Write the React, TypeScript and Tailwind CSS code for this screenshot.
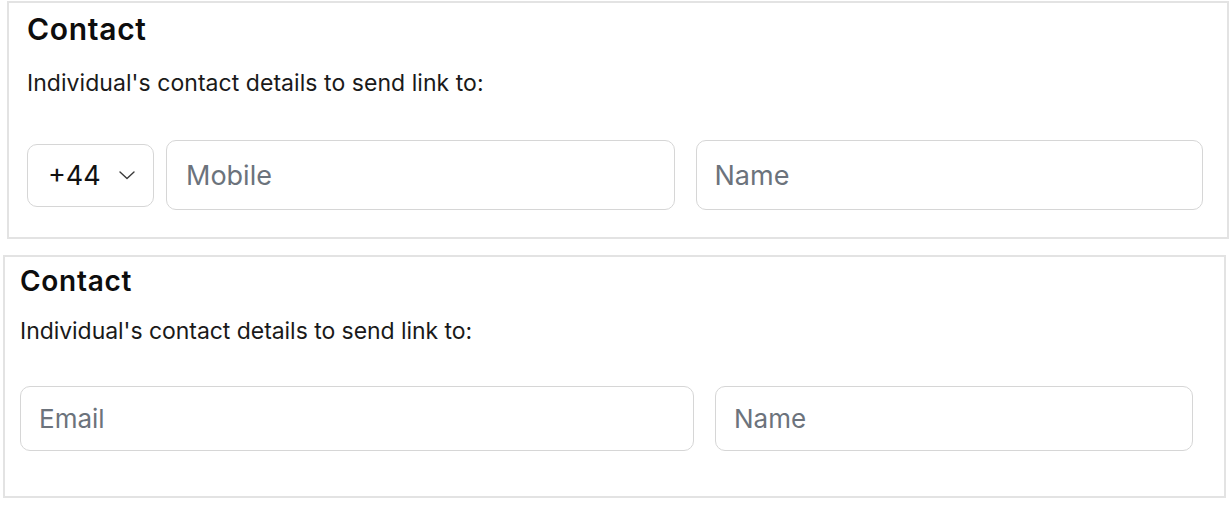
import React from "react";

const font = { fontFamily: "Inter, 'Liberation Sans', sans-serif" };

function Chevron() {
  return (
    <svg width="16" height="9" viewBox="0 0 16 9" fill="none" className="block">
      <polyline points="1,1 8,7.5 15,1" stroke="#3a3a3a" strokeWidth="1.4" strokeLinecap="round" strokeLinejoin="round" />
    </svg>
  );
}

export default function App() {
  return (
    <div className="bg-white w-[1232px] h-[506px] overflow-hidden text-[#111]" style={font}>
      {/* Panel 1 */}
      <div className="ml-[7px] mt-[1px] w-[1222px] h-[238px] border-2 border-[#e3e3e3] pl-[18px] pr-[24px] pt-[8px]">
        <h2 className="text-[30px] leading-[36px] font-semibold tracking-[0.7px] text-[#0d0d0d]">Contact</h2>
        <p className="mt-[22px] text-[23px] leading-[28px] tracking-[0.05px] text-[#1a1a1a]">
          Individual's contact details to send link to:
        </p>
        <div className="mt-[43px] flex items-center">
          <div className="w-[127px] h-[63px] shrink-0 rounded-[10px] border-[1.5px] border-[#d6d6d6] flex items-center pl-[20px] pr-[18px] justify-between">
            <span className="text-[27px] leading-none text-[#111]">+44</span>
            <Chevron />
          </div>
          <input
            className="ml-[12px] flex-1 min-w-0 h-[70px] rounded-[10px] border-[1.5px] border-[#d6d6d6] pl-[19px] text-[27px] outline-none placeholder:text-[#6c737c]"
            placeholder="Mobile"
          />
          <input
            className="ml-[21px] flex-1 min-w-0 h-[70px] rounded-[10px] border-[1.5px] border-[#d6d6d6] pl-[18px] text-[27px] outline-none placeholder:text-[#6c737c]"
            placeholder="Name"
          />
        </div>
      </div>

      {/* Panel 2 */}
      <div className="ml-[3px] mt-[16px] w-[1223px] h-[243px] border-2 border-[#e3e3e3] pl-[15px] pr-[31px] pt-[7px]">
        <h2 className="text-[28px] leading-[34px] font-semibold tracking-[0.7px] text-[#0d0d0d]">Contact</h2>
        <p className="mt-[19px] text-[23px] leading-[28px] tracking-[-0.05px] text-[#1a1a1a]">
          Individual's contact details to send link to:
        </p>
        <div className="mt-[41px] flex items-center">
          <input
            className="w-[674px] shrink-0 h-[65px] rounded-[10px] border-[1.5px] border-[#d6d6d6] pl-[18px] text-[26px] outline-none placeholder:text-[#6c737c]"
            placeholder="Email"
          />
          <input
            className="ml-[21px] flex-1 min-w-0 h-[65px] rounded-[10px] border-[1.5px] border-[#d6d6d6] pl-[18px] text-[26px] outline-none placeholder:text-[#6c737c]"
            placeholder="Name"
          />
        </div>
      </div>
    </div>
  );
}
